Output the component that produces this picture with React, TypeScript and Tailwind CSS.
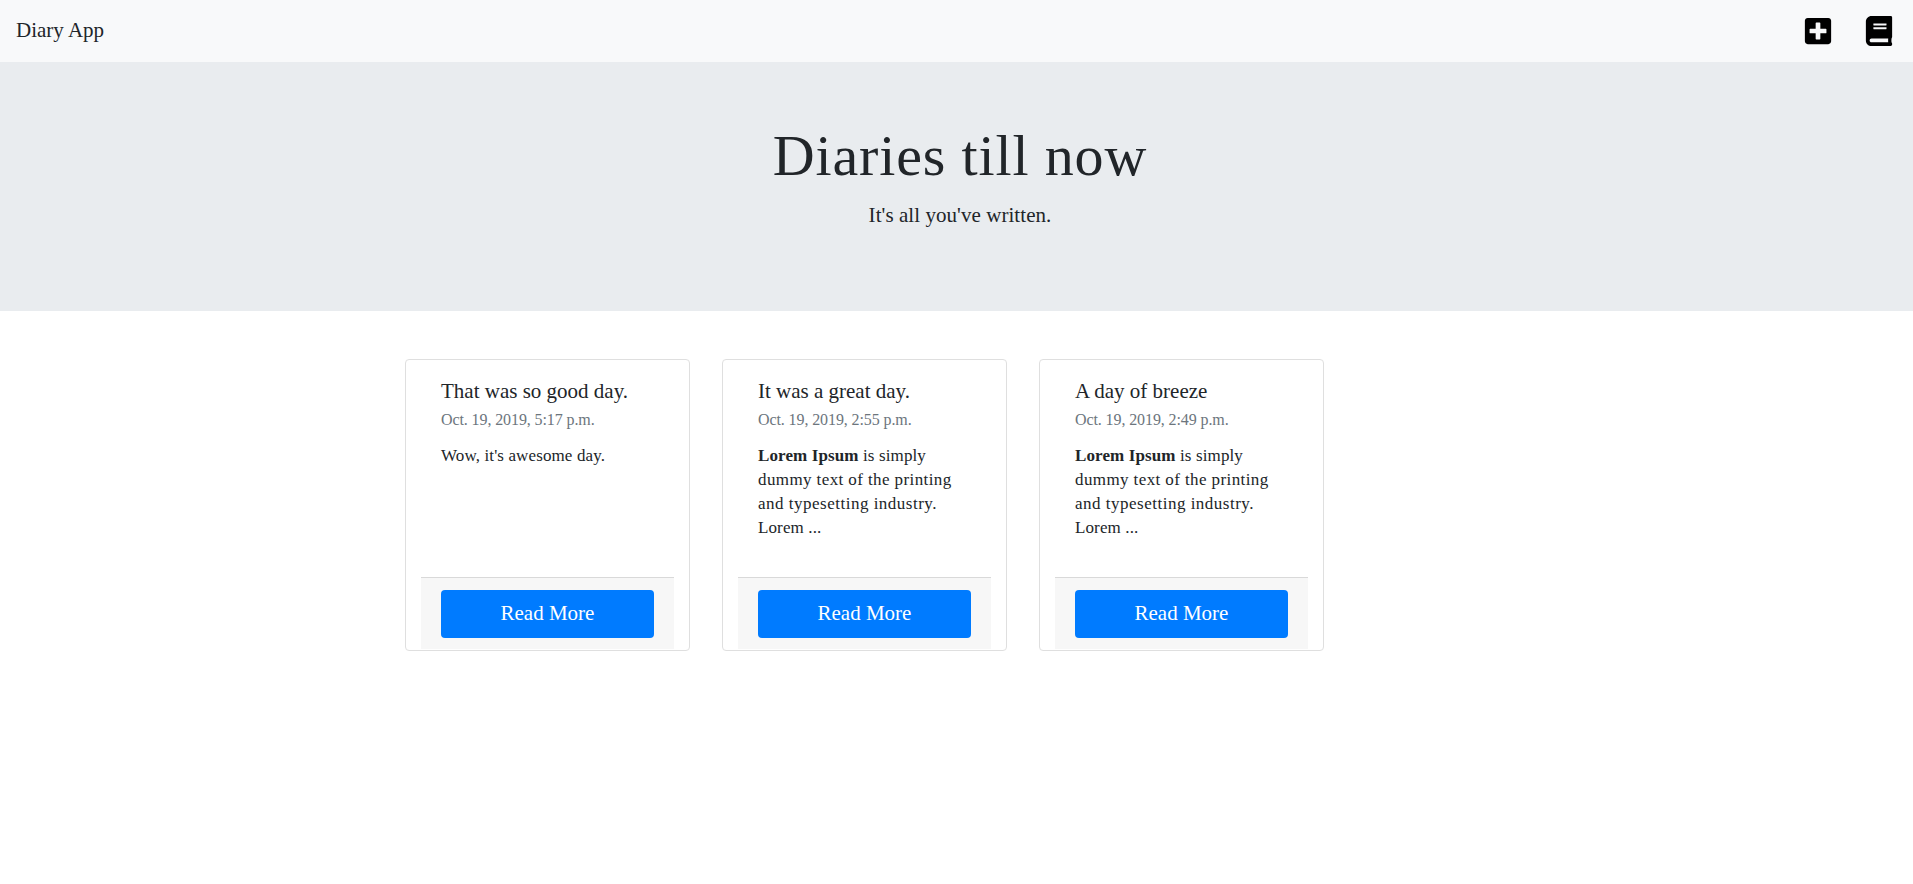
import type { ReactNode } from "react";
import { FaPlusSquare, FaBook } from "react-icons/fa";

const lorem = (
  <>
    <strong className="font-bold">Lorem Ipsum</strong> is simply
    <br />
    <span className="tracking-[0.4px]">dummy text of the printing</span>
    <br />
    <span className="tracking-[0.5px]">and typesetting industry.</span>
    <br />
    Lorem ...
  </>
);

const diaries = [
  { title: "That was so good day.", date: "Oct. 19, 2019, 5:17 p.m.", body: <>Wow, it's awesome day.</> },
  { title: "It was a great day.", date: "Oct. 19, 2019, 2:55 p.m.", body: lorem },
  { title: "A day of breeze", date: "Oct. 19, 2019, 2:49 p.m.", body: lorem },
];

function Card({ title, date, body }: { title: string; date: string; body: ReactNode }) {
  return (
    <div className="w-[285px] h-[292px] border border-[#dfdfdf] rounded-[4px] px-[15px] flex flex-col">
      <div className="flex-1 px-5 pt-[19px]">
        <h5 className="text-[21px] leading-[24px] text-[#212529] mb-[5px]">{title}</h5>
        <div className="text-[16px] leading-[24px] tracking-[-0.1px] text-[#6c757d] mb-[12px]">{date}</div>
        <p className="text-[17px] leading-[24px] tracking-[0.12px] text-[#212529]">{body}</p>
      </div>
      <div className="h-[72px] mb-px bg-[#f7f7f7] border-t border-[#d9d9d9] px-5 pt-3">
        <button className="block w-full h-12 rounded-[4px] bg-[#007bff] text-white text-[21px]">Read More</button>
      </div>
    </div>
  );
}

export default function App() {
  return (
    <div className="min-h-[884px] bg-white font-['Liberation_Serif',serif]">
      <nav className="h-[62px] bg-[#f8f9fa] flex items-center justify-between pl-4 pr-[19px]">
        <span className="text-[21px] text-[#212529]">Diary App</span>
        <div className="flex items-center gap-[31px]">
          <FaPlusSquare size={30} color="#000" />
          <FaBook size={30} color="#000" />
        </div>
      </nav>
      <section className="h-[249px] bg-[#e9ecef] flex flex-col items-center pt-[60px] pl-[7px]">
        <h1 className="text-[58px] leading-[67px] tracking-[0.85px] text-[#212529]">Diaries till now</h1>
        <p className="text-[21px] leading-[30px] tracking-[0.06px] text-[#212529] mt-[11px]">It's all you've written.</p>
      </section>
      <main className="flex gap-[32px] pl-[405px] pt-12">
        {diaries.map((d) => (
          <Card key={d.title} {...d} />
        ))}
      </main>
    </div>
  );
}
